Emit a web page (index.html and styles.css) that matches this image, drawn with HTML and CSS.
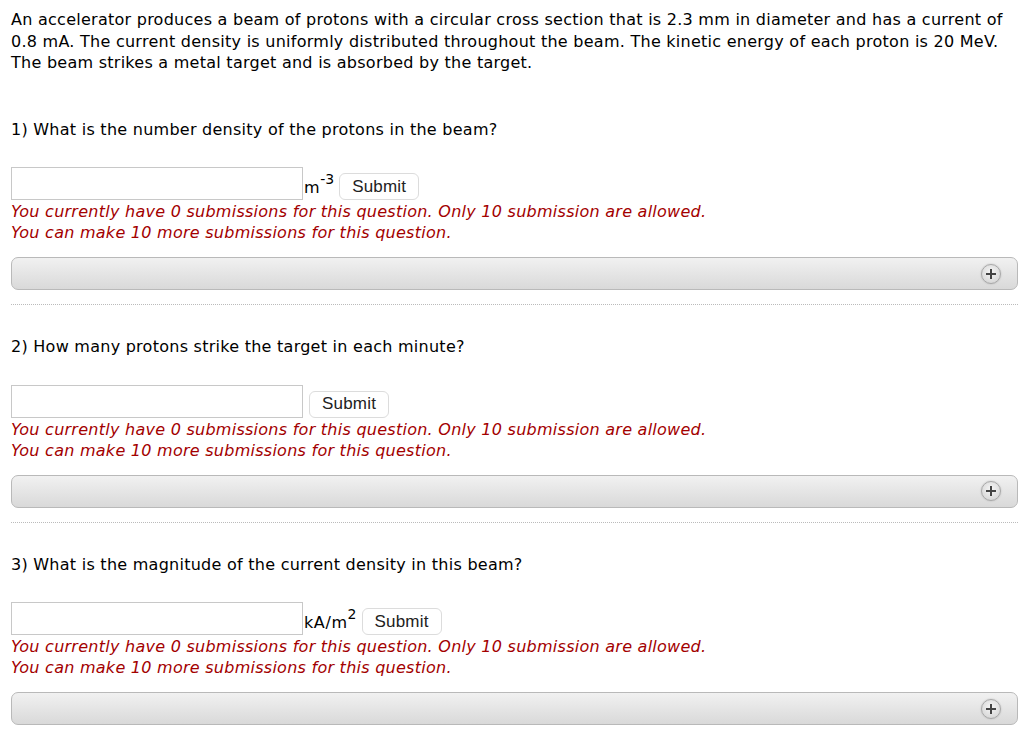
FILE: index.html
```html
<!DOCTYPE html>
<html>
<head>
<meta charset="utf-8">
<link rel="stylesheet" href="styles.css">
</head>
<body>
<p class="intro">An accelerator produces a beam of protons with a circular cross section that is 2.3 mm in diameter and has a current of 0.8 mA. The current density is uniformly distributed throughout the beam. The kinetic energy of each proton is 20 MeV. The beam strikes a metal target and is absorbed by the target.</p>

<div class="question">
  <p class="qtext">1) What is the number density of the protons in the beam?</p>
  <div class="answer-row">
    <input class="answer" type="text"><span class="unit">m<sup>-3</sup></span><button class="submit">Submit</button>
  </div>
  <p class="notice">You currently have 0 submissions for this question. Only 10 submission are allowed.<br>You can make 10 more submissions for this question.</p>
  <div class="bar"><span class="plus"></span></div>
</div>
<div class="sep"></div>

<div class="question">
  <p class="qtext">2) How many protons strike the target in each minute?</p>
  <div class="answer-row">
    <input class="answer" type="text"><span class="unit"></span><button class="submit">Submit</button>
  </div>
  <p class="notice">You currently have 0 submissions for this question. Only 10 submission are allowed.<br>You can make 10 more submissions for this question.</p>
  <div class="bar"><span class="plus"></span></div>
</div>
<div class="sep"></div>

<div class="question">
  <p class="qtext">3) What is the magnitude of the current density in this beam?</p>
  <div class="answer-row">
    <input class="answer" type="text"><span class="unit">kA/m<sup>2</sup></span><button class="submit">Submit</button>
  </div>
  <p class="notice">You currently have 0 submissions for this question. Only 10 submission are allowed.<br>You can make 10 more submissions for this question.</p>
  <div class="bar"><span class="plus"></span></div>
</div>
</body>
</html>
```

FILE: styles.css
```css
html, body {
  margin: 0;
  padding: 0;
  background: #fff;
}
body {
  padding: 9px 6px 0 11px;
  font-family: "DejaVu Sans", sans-serif;
  font-size: 16px;
  line-height: 21.5px;
  letter-spacing: 0.26px;
  color: #000;
}
p { margin: 0; }
.intro { margin-bottom: 45px; }
.question { padding-bottom: 14px; }
.qtext { margin-bottom: 27px; }
.answer-row {
  display: flex;
  align-items: flex-end;
  height: 33px;
}
.answer {
  box-sizing: border-box;
  width: 292px;
  height: 33px;
  margin: 0;
  border: 1px solid #c8c8c8;
  padding: 0 4px;
  background: #fff;
  font: inherit;
}
.unit {
  font-size: 16px;
  line-height: 21px;
  padding-left: 1px;
  margin-right: 5px;
  margin-bottom: 2px;
  letter-spacing: 0.6px;
}
.unit sup {
  font-size: 14px;
  line-height: 0;
  letter-spacing: 0;
  vertical-align: 9px;
}
.submit {
  box-sizing: border-box;
  height: 27px;
  padding: 0 12px;
  margin: 0;
  border: 1px solid #dcdcdc;
  border-radius: 6px;
  background: #fff;
  font-family: "Liberation Sans", Arial, sans-serif;
  font-size: 17px;
  letter-spacing: 0.2px;
  color: #222;
}
.notice {
  color: #a30000;
  font-style: italic;
  line-height: 21px;
  margin-top: 1px;
}
.bar {
  box-sizing: border-box;
  margin-top: 14px;
  height: 33px;
  border: 1px solid #b9b9b9;
  border-radius: 7px;
  background: linear-gradient(#f1f1f1, #d9d9d9);
  display: flex;
  align-items: center;
  justify-content: flex-end;
  padding-right: 16px;
}
.plus {
  position: relative;
  box-sizing: border-box;
  width: 20px;
  height: 20px;
  border-radius: 50%;
  border: 1px solid #a8a8a8;
  background: radial-gradient(circle at 50% 40%, #f6f6f6, #cfcfcf);
  box-shadow: 0 0 2px rgba(0,0,0,0.2);
}
.plus::before, .plus::after {
  content: "";
  position: absolute;
  background: #444;
  left: 50%;
  top: 50%;
}
.plus::before { width: 10px; height: 2px; margin: -1px 0 0 -5px; }
.plus::after { width: 2px; height: 10px; margin: -5px 0 0 -1px; }
.sep {
  height: 0;
  border-top: 1px dotted #bbb;
  margin-bottom: 31px;
}
```
